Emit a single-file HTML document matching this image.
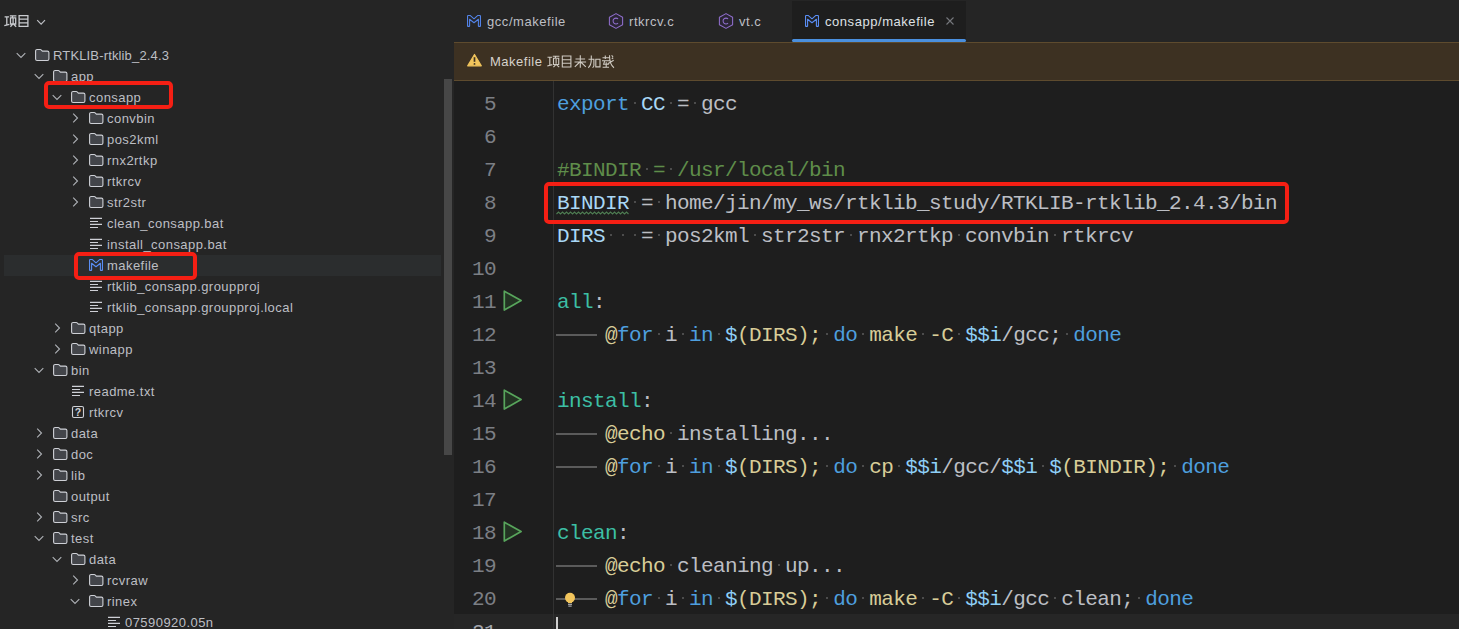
<!DOCTYPE html>
<html><head><meta charset="utf-8">
<style>
*{margin:0;padding:0;box-sizing:border-box}
html,body{width:1459px;height:629px;overflow:hidden;background:#252525}
body{position:relative;font-family:"Liberation Sans",sans-serif;color:#bdbfc4}
.abs{position:absolute}
#left{left:0;top:0;width:454px;height:629px;background:#252525}
.row{position:absolute;left:0;height:21px;width:441px;font-size:13px;line-height:21px;white-space:nowrap}
.row .t{position:absolute;top:0}
.row svg{position:absolute}
.sel{background:#2b2d2e;left:4px;width:437px}
#scroll{left:444px;top:79px;width:8px;height:376px;background:#474747}
#tabs{left:454px;top:0;width:1005px;height:42px;background:#252525}
.tab{position:absolute;top:1px;height:42px;font-size:13px;line-height:42px;letter-spacing:0.55px;color:#bdbfc4;white-space:nowrap}
#banner{left:454px;top:42px;width:1005px;height:39px;background:#3d3122;border-top:1px solid #5e4b2e;border-bottom:1px solid #5e4b2e;font-size:13px;line-height:37px;color:#d6d2cb}
#editor{left:454px;top:81px;width:1005px;height:548px;background:#1e1e1e;overflow:hidden}
.ln{position:absolute;left:0;width:42px;text-align:right;font-family:"Liberation Mono",monospace;font-size:21px;letter-spacing:-0.6px;color:#7c7f85;height:33px;line-height:33px}
.cl{position:absolute;left:103px;font-family:"Liberation Mono",monospace;font-size:21px;letter-spacing:-0.6px;height:33px;line-height:33px;white-space:pre;color:#bcbec4}
.k{color:#4e9fde}.v{color:#a9d8f5}.c{color:#5f8d4a}.tg{color:#3cbfa4}.b{color:#d8cd98}.d{color:#8ecff7}
.red{position:absolute;border:4px solid #f51f14;border-radius:5px}
</style></head><body>
<div id="left" class="abs">
<svg class="abs" style="left:0;top:0" width="60" height="40" viewBox="0 0 60 40">
<g stroke="#c9cbcf" stroke-width="1.3" fill="none">
<path d="M4.6 16.8h4.4M6.8 16.8v8.2M4.3 25.7l5-1.4"/>
<path d="M9.8 15.9h6.6M12.8 15.9l-.6 1.7M10.5 17.8h5.2v6.2h-5.2zM13.1 18.5v4.8M12.6 24.3l-2.2 2.5M13.6 24.3l2.6 2.5"/>
<path d="M19.1 15.6h8.8v10.8h-8.8zM19.1 19.2h8.8M19.1 22.8h8.8"/>
</g>
<path d="M37.2 20.2l3.9 3.9 3.9-3.9" stroke="#bdbfc4" stroke-width="1.2" fill="none"/>
</svg>
<div class="row" style="top:45px"><svg style="left:13px;top:2px" width="16" height="16" viewBox="0 0 16 16"><path d="M3.7 6.2l4.3 4.3 4.3-4.3" fill="none" stroke="#aeb1b6" stroke-width="1.1"/></svg><svg style="left:34px;top:2px" width="16" height="16" viewBox="0 0 16 16"><path d="M1.6 4a1.5 1.5 0 0 1 1.5-1.5h3.3a1 1 0 0 1 .7.3l1.3 1.3h5a1.5 1.5 0 0 1 1.5 1.5v6.4a1.5 1.5 0 0 1-1.5 1.5h-10.3a1.5 1.5 0 0 1-1.5-1.5z" fill="#43454a" stroke="#ced0d6" stroke-width="1.1"/></svg><span class="t" style="left:53px;letter-spacing:0.15px">RTKLIB-rtklib_2.4.3</span></div><div class="row" style="top:66px"><svg style="left:31px;top:2px" width="16" height="16" viewBox="0 0 16 16"><path d="M3.7 6.2l4.3 4.3 4.3-4.3" fill="none" stroke="#aeb1b6" stroke-width="1.1"/></svg><svg style="left:52px;top:2px" width="16" height="16" viewBox="0 0 16 16"><path d="M1.6 4a1.5 1.5 0 0 1 1.5-1.5h3.3a1 1 0 0 1 .7.3l1.3 1.3h5a1.5 1.5 0 0 1 1.5 1.5v6.4a1.5 1.5 0 0 1-1.5 1.5h-10.3a1.5 1.5 0 0 1-1.5-1.5z" fill="#43454a" stroke="#ced0d6" stroke-width="1.1"/></svg><span class="t" style="left:71px;letter-spacing:0.45px">app</span></div><div class="row" style="top:87px"><svg style="left:49px;top:2px" width="16" height="16" viewBox="0 0 16 16"><path d="M3.7 6.2l4.3 4.3 4.3-4.3" fill="none" stroke="#aeb1b6" stroke-width="1.1"/></svg><svg style="left:70px;top:2px" width="16" height="16" viewBox="0 0 16 16"><path d="M1.6 4a1.5 1.5 0 0 1 1.5-1.5h3.3a1 1 0 0 1 .7.3l1.3 1.3h5a1.5 1.5 0 0 1 1.5 1.5v6.4a1.5 1.5 0 0 1-1.5 1.5h-10.3a1.5 1.5 0 0 1-1.5-1.5z" fill="#43454a" stroke="#ced0d6" stroke-width="1.1"/></svg><span class="t" style="left:89px;letter-spacing:0.45px">consapp</span></div><div class="row" style="top:108px"><svg style="left:67px;top:2px" width="16" height="16" viewBox="0 0 16 16"><path d="M6.2 3.7l4.3 4.3-4.3 4.3" fill="none" stroke="#aeb1b6" stroke-width="1.1"/></svg><svg style="left:88px;top:2px" width="16" height="16" viewBox="0 0 16 16"><path d="M1.6 4a1.5 1.5 0 0 1 1.5-1.5h3.3a1 1 0 0 1 .7.3l1.3 1.3h5a1.5 1.5 0 0 1 1.5 1.5v6.4a1.5 1.5 0 0 1-1.5 1.5h-10.3a1.5 1.5 0 0 1-1.5-1.5z" fill="#43454a" stroke="#ced0d6" stroke-width="1.1"/></svg><span class="t" style="left:107px;letter-spacing:0.45px">convbin</span></div><div class="row" style="top:129px"><svg style="left:67px;top:2px" width="16" height="16" viewBox="0 0 16 16"><path d="M6.2 3.7l4.3 4.3-4.3 4.3" fill="none" stroke="#aeb1b6" stroke-width="1.1"/></svg><svg style="left:88px;top:2px" width="16" height="16" viewBox="0 0 16 16"><path d="M1.6 4a1.5 1.5 0 0 1 1.5-1.5h3.3a1 1 0 0 1 .7.3l1.3 1.3h5a1.5 1.5 0 0 1 1.5 1.5v6.4a1.5 1.5 0 0 1-1.5 1.5h-10.3a1.5 1.5 0 0 1-1.5-1.5z" fill="#43454a" stroke="#ced0d6" stroke-width="1.1"/></svg><span class="t" style="left:107px;letter-spacing:0.45px">pos2kml</span></div><div class="row" style="top:150px"><svg style="left:67px;top:2px" width="16" height="16" viewBox="0 0 16 16"><path d="M6.2 3.7l4.3 4.3-4.3 4.3" fill="none" stroke="#aeb1b6" stroke-width="1.1"/></svg><svg style="left:88px;top:2px" width="16" height="16" viewBox="0 0 16 16"><path d="M1.6 4a1.5 1.5 0 0 1 1.5-1.5h3.3a1 1 0 0 1 .7.3l1.3 1.3h5a1.5 1.5 0 0 1 1.5 1.5v6.4a1.5 1.5 0 0 1-1.5 1.5h-10.3a1.5 1.5 0 0 1-1.5-1.5z" fill="#43454a" stroke="#ced0d6" stroke-width="1.1"/></svg><span class="t" style="left:107px;letter-spacing:0.45px">rnx2rtkp</span></div><div class="row" style="top:171px"><svg style="left:67px;top:2px" width="16" height="16" viewBox="0 0 16 16"><path d="M6.2 3.7l4.3 4.3-4.3 4.3" fill="none" stroke="#aeb1b6" stroke-width="1.1"/></svg><svg style="left:88px;top:2px" width="16" height="16" viewBox="0 0 16 16"><path d="M1.6 4a1.5 1.5 0 0 1 1.5-1.5h3.3a1 1 0 0 1 .7.3l1.3 1.3h5a1.5 1.5 0 0 1 1.5 1.5v6.4a1.5 1.5 0 0 1-1.5 1.5h-10.3a1.5 1.5 0 0 1-1.5-1.5z" fill="#43454a" stroke="#ced0d6" stroke-width="1.1"/></svg><span class="t" style="left:107px;letter-spacing:0.45px">rtkrcv</span></div><div class="row" style="top:192px"><svg style="left:67px;top:2px" width="16" height="16" viewBox="0 0 16 16"><path d="M6.2 3.7l4.3 4.3-4.3 4.3" fill="none" stroke="#aeb1b6" stroke-width="1.1"/></svg><svg style="left:88px;top:2px" width="16" height="16" viewBox="0 0 16 16"><path d="M1.6 4a1.5 1.5 0 0 1 1.5-1.5h3.3a1 1 0 0 1 .7.3l1.3 1.3h5a1.5 1.5 0 0 1 1.5 1.5v6.4a1.5 1.5 0 0 1-1.5 1.5h-10.3a1.5 1.5 0 0 1-1.5-1.5z" fill="#43454a" stroke="#ced0d6" stroke-width="1.1"/></svg><span class="t" style="left:107px;letter-spacing:0.45px">str2str</span></div><div class="row" style="top:213px"><svg style="left:88px;top:2px" width="16" height="16" viewBox="0 0 16 16"><g stroke="#ced0d6" stroke-width="1.1"><path d="M2 3.4h12M2 6.5h8M2 9.4h12M2 12.5h8"/></g></svg><span class="t" style="left:107px;letter-spacing:0.45px">clean_consapp.bat</span></div><div class="row" style="top:234px"><svg style="left:88px;top:2px" width="16" height="16" viewBox="0 0 16 16"><g stroke="#ced0d6" stroke-width="1.1"><path d="M2 3.4h12M2 6.5h8M2 9.4h12M2 12.5h8"/></g></svg><span class="t" style="left:107px;letter-spacing:0.45px">install_consapp.bat</span></div><div class="row sel" style="top:255px"><svg style="left:84px;top:2px" width="16" height="16" viewBox="0 0 16 16"><path d="M1.55 12.9V3.1Q1.55 2.45 2.2 2.45H4.1L8 5.8L11.9 2.45H13.8Q14.45 2.45 14.45 3.1V12.9Q14.45 13.4 13.95 13.4H12.9Q12.4 13.4 12.4 12.9V6.3L8 9.7L3.6 6.3V12.9Q3.6 13.4 3.1 13.4H2.05Q1.55 13.4 1.55 12.9Z" fill="none" stroke="#5a8ef5" stroke-width="1.1" stroke-linejoin="round"/></svg><span class="t" style="left:103px;letter-spacing:0.45px">makefile</span></div><div class="row" style="top:276px"><svg style="left:88px;top:2px" width="16" height="16" viewBox="0 0 16 16"><g stroke="#ced0d6" stroke-width="1.1"><path d="M2 3.4h12M2 6.5h8M2 9.4h12M2 12.5h8"/></g></svg><span class="t" style="left:107px;letter-spacing:0.45px">rtklib_consapp.groupproj</span></div><div class="row" style="top:297px"><svg style="left:88px;top:2px" width="16" height="16" viewBox="0 0 16 16"><g stroke="#ced0d6" stroke-width="1.1"><path d="M2 3.4h12M2 6.5h8M2 9.4h12M2 12.5h8"/></g></svg><span class="t" style="left:107px;letter-spacing:0.45px">rtklib_consapp.groupproj.local</span></div><div class="row" style="top:318px"><svg style="left:49px;top:2px" width="16" height="16" viewBox="0 0 16 16"><path d="M6.2 3.7l4.3 4.3-4.3 4.3" fill="none" stroke="#aeb1b6" stroke-width="1.1"/></svg><svg style="left:70px;top:2px" width="16" height="16" viewBox="0 0 16 16"><path d="M1.6 4a1.5 1.5 0 0 1 1.5-1.5h3.3a1 1 0 0 1 .7.3l1.3 1.3h5a1.5 1.5 0 0 1 1.5 1.5v6.4a1.5 1.5 0 0 1-1.5 1.5h-10.3a1.5 1.5 0 0 1-1.5-1.5z" fill="#43454a" stroke="#ced0d6" stroke-width="1.1"/></svg><span class="t" style="left:89px;letter-spacing:0.45px">qtapp</span></div><div class="row" style="top:339px"><svg style="left:49px;top:2px" width="16" height="16" viewBox="0 0 16 16"><path d="M6.2 3.7l4.3 4.3-4.3 4.3" fill="none" stroke="#aeb1b6" stroke-width="1.1"/></svg><svg style="left:70px;top:2px" width="16" height="16" viewBox="0 0 16 16"><path d="M1.6 4a1.5 1.5 0 0 1 1.5-1.5h3.3a1 1 0 0 1 .7.3l1.3 1.3h5a1.5 1.5 0 0 1 1.5 1.5v6.4a1.5 1.5 0 0 1-1.5 1.5h-10.3a1.5 1.5 0 0 1-1.5-1.5z" fill="#43454a" stroke="#ced0d6" stroke-width="1.1"/></svg><span class="t" style="left:89px;letter-spacing:0.45px">winapp</span></div><div class="row" style="top:360px"><svg style="left:31px;top:2px" width="16" height="16" viewBox="0 0 16 16"><path d="M3.7 6.2l4.3 4.3 4.3-4.3" fill="none" stroke="#aeb1b6" stroke-width="1.1"/></svg><svg style="left:52px;top:2px" width="16" height="16" viewBox="0 0 16 16"><path d="M1.6 4a1.5 1.5 0 0 1 1.5-1.5h3.3a1 1 0 0 1 .7.3l1.3 1.3h5a1.5 1.5 0 0 1 1.5 1.5v6.4a1.5 1.5 0 0 1-1.5 1.5h-10.3a1.5 1.5 0 0 1-1.5-1.5z" fill="#43454a" stroke="#ced0d6" stroke-width="1.1"/></svg><span class="t" style="left:71px;letter-spacing:0.45px">bin</span></div><div class="row" style="top:381px"><svg style="left:70px;top:2px" width="16" height="16" viewBox="0 0 16 16"><g stroke="#ced0d6" stroke-width="1.1"><path d="M2 3.4h12M2 6.5h8M2 9.4h12M2 12.5h8"/></g></svg><span class="t" style="left:89px;letter-spacing:0.45px">readme.txt</span></div><div class="row" style="top:402px"><svg style="left:70px;top:2px" width="16" height="16" viewBox="0 0 16 16"><rect x="2.5" y="2.5" width="11" height="11" rx="1.5" fill="none" stroke="#ced0d6" stroke-width="1.1"/><text x="8" y="12" text-anchor="middle" font-family="Liberation Sans" font-weight="bold" font-size="10.5" fill="#ced0d6">?</text></svg><span class="t" style="left:89px;letter-spacing:0.45px">rtkrcv</span></div><div class="row" style="top:423px"><svg style="left:31px;top:2px" width="16" height="16" viewBox="0 0 16 16"><path d="M6.2 3.7l4.3 4.3-4.3 4.3" fill="none" stroke="#aeb1b6" stroke-width="1.1"/></svg><svg style="left:52px;top:2px" width="16" height="16" viewBox="0 0 16 16"><path d="M1.6 4a1.5 1.5 0 0 1 1.5-1.5h3.3a1 1 0 0 1 .7.3l1.3 1.3h5a1.5 1.5 0 0 1 1.5 1.5v6.4a1.5 1.5 0 0 1-1.5 1.5h-10.3a1.5 1.5 0 0 1-1.5-1.5z" fill="#43454a" stroke="#ced0d6" stroke-width="1.1"/></svg><span class="t" style="left:71px;letter-spacing:0.45px">data</span></div><div class="row" style="top:444px"><svg style="left:31px;top:2px" width="16" height="16" viewBox="0 0 16 16"><path d="M6.2 3.7l4.3 4.3-4.3 4.3" fill="none" stroke="#aeb1b6" stroke-width="1.1"/></svg><svg style="left:52px;top:2px" width="16" height="16" viewBox="0 0 16 16"><path d="M1.6 4a1.5 1.5 0 0 1 1.5-1.5h3.3a1 1 0 0 1 .7.3l1.3 1.3h5a1.5 1.5 0 0 1 1.5 1.5v6.4a1.5 1.5 0 0 1-1.5 1.5h-10.3a1.5 1.5 0 0 1-1.5-1.5z" fill="#43454a" stroke="#ced0d6" stroke-width="1.1"/></svg><span class="t" style="left:71px;letter-spacing:0.45px">doc</span></div><div class="row" style="top:465px"><svg style="left:31px;top:2px" width="16" height="16" viewBox="0 0 16 16"><path d="M6.2 3.7l4.3 4.3-4.3 4.3" fill="none" stroke="#aeb1b6" stroke-width="1.1"/></svg><svg style="left:52px;top:2px" width="16" height="16" viewBox="0 0 16 16"><path d="M1.6 4a1.5 1.5 0 0 1 1.5-1.5h3.3a1 1 0 0 1 .7.3l1.3 1.3h5a1.5 1.5 0 0 1 1.5 1.5v6.4a1.5 1.5 0 0 1-1.5 1.5h-10.3a1.5 1.5 0 0 1-1.5-1.5z" fill="#43454a" stroke="#ced0d6" stroke-width="1.1"/></svg><span class="t" style="left:71px;letter-spacing:0.45px">lib</span></div><div class="row" style="top:486px"><svg style="left:52px;top:2px" width="16" height="16" viewBox="0 0 16 16"><path d="M1.6 4a1.5 1.5 0 0 1 1.5-1.5h3.3a1 1 0 0 1 .7.3l1.3 1.3h5a1.5 1.5 0 0 1 1.5 1.5v6.4a1.5 1.5 0 0 1-1.5 1.5h-10.3a1.5 1.5 0 0 1-1.5-1.5z" fill="#43454a" stroke="#ced0d6" stroke-width="1.1"/></svg><span class="t" style="left:71px;letter-spacing:0.45px">output</span></div><div class="row" style="top:507px"><svg style="left:31px;top:2px" width="16" height="16" viewBox="0 0 16 16"><path d="M6.2 3.7l4.3 4.3-4.3 4.3" fill="none" stroke="#aeb1b6" stroke-width="1.1"/></svg><svg style="left:52px;top:2px" width="16" height="16" viewBox="0 0 16 16"><path d="M1.6 4a1.5 1.5 0 0 1 1.5-1.5h3.3a1 1 0 0 1 .7.3l1.3 1.3h5a1.5 1.5 0 0 1 1.5 1.5v6.4a1.5 1.5 0 0 1-1.5 1.5h-10.3a1.5 1.5 0 0 1-1.5-1.5z" fill="#43454a" stroke="#ced0d6" stroke-width="1.1"/></svg><span class="t" style="left:71px;letter-spacing:0.45px">src</span></div><div class="row" style="top:528px"><svg style="left:31px;top:2px" width="16" height="16" viewBox="0 0 16 16"><path d="M3.7 6.2l4.3 4.3 4.3-4.3" fill="none" stroke="#aeb1b6" stroke-width="1.1"/></svg><svg style="left:52px;top:2px" width="16" height="16" viewBox="0 0 16 16"><path d="M1.6 4a1.5 1.5 0 0 1 1.5-1.5h3.3a1 1 0 0 1 .7.3l1.3 1.3h5a1.5 1.5 0 0 1 1.5 1.5v6.4a1.5 1.5 0 0 1-1.5 1.5h-10.3a1.5 1.5 0 0 1-1.5-1.5z" fill="#43454a" stroke="#ced0d6" stroke-width="1.1"/></svg><span class="t" style="left:71px;letter-spacing:0.45px">test</span></div><div class="row" style="top:549px"><svg style="left:49px;top:2px" width="16" height="16" viewBox="0 0 16 16"><path d="M3.7 6.2l4.3 4.3 4.3-4.3" fill="none" stroke="#aeb1b6" stroke-width="1.1"/></svg><svg style="left:70px;top:2px" width="16" height="16" viewBox="0 0 16 16"><path d="M1.6 4a1.5 1.5 0 0 1 1.5-1.5h3.3a1 1 0 0 1 .7.3l1.3 1.3h5a1.5 1.5 0 0 1 1.5 1.5v6.4a1.5 1.5 0 0 1-1.5 1.5h-10.3a1.5 1.5 0 0 1-1.5-1.5z" fill="#43454a" stroke="#ced0d6" stroke-width="1.1"/></svg><span class="t" style="left:89px;letter-spacing:0.45px">data</span></div><div class="row" style="top:570px"><svg style="left:67px;top:2px" width="16" height="16" viewBox="0 0 16 16"><path d="M6.2 3.7l4.3 4.3-4.3 4.3" fill="none" stroke="#aeb1b6" stroke-width="1.1"/></svg><svg style="left:88px;top:2px" width="16" height="16" viewBox="0 0 16 16"><path d="M1.6 4a1.5 1.5 0 0 1 1.5-1.5h3.3a1 1 0 0 1 .7.3l1.3 1.3h5a1.5 1.5 0 0 1 1.5 1.5v6.4a1.5 1.5 0 0 1-1.5 1.5h-10.3a1.5 1.5 0 0 1-1.5-1.5z" fill="#43454a" stroke="#ced0d6" stroke-width="1.1"/></svg><span class="t" style="left:107px;letter-spacing:0.45px">rcvraw</span></div><div class="row" style="top:591px"><svg style="left:67px;top:2px" width="16" height="16" viewBox="0 0 16 16"><path d="M3.7 6.2l4.3 4.3 4.3-4.3" fill="none" stroke="#aeb1b6" stroke-width="1.1"/></svg><svg style="left:88px;top:2px" width="16" height="16" viewBox="0 0 16 16"><path d="M1.6 4a1.5 1.5 0 0 1 1.5-1.5h3.3a1 1 0 0 1 .7.3l1.3 1.3h5a1.5 1.5 0 0 1 1.5 1.5v6.4a1.5 1.5 0 0 1-1.5 1.5h-10.3a1.5 1.5 0 0 1-1.5-1.5z" fill="#43454a" stroke="#ced0d6" stroke-width="1.1"/></svg><span class="t" style="left:107px;letter-spacing:0.45px">rinex</span></div><div class="row" style="top:612px"><svg style="left:106px;top:2px" width="16" height="16" viewBox="0 0 16 16"><g stroke="#ced0d6" stroke-width="1.1"><path d="M2 3.4h12M2 6.5h8M2 9.4h12M2 12.5h8"/></g></svg><span class="t" style="left:125px;letter-spacing:0.45px">07590920.05n</span></div>
</div>
<div id="scroll" class="abs"></div>
<div id="tabs" class="abs"><svg style="position:absolute;left:12px;top:13px" width="16" height="16" viewBox="0 0 16 16"><path d="M1.55 12.9V3.1Q1.55 2.45 2.2 2.45H4.1L8 5.8L11.9 2.45H13.8Q14.45 2.45 14.45 3.1V12.9Q14.45 13.4 13.95 13.4H12.9Q12.4 13.4 12.4 12.9V6.3L8 9.7L3.6 6.3V12.9Q3.6 13.4 3.1 13.4H2.05Q1.55 13.4 1.55 12.9Z" fill="none" stroke="#5283e8" stroke-width="1.1" stroke-linejoin="round"/></svg><span class="tab" style="left:33px">gcc/makefile</span><svg style="position:absolute;left:154px;top:13px" width="16" height="16" viewBox="0 0 16 16"><path d="M8 0.6L14.6 4.3V11.7L8 15.4L1.4 11.7V4.3Z" fill="#2a2534" stroke="#8f6ecb" stroke-width="1.05" stroke-linejoin="round"/><path d="M10.05 5.95A2.9 2.9 0 1 0 10.05 10.05" fill="none" stroke="#8f6ecb" stroke-width="1.05"/></svg><span class="tab" style="left:175px">rtkrcv.c</span><svg style="position:absolute;left:264px;top:13px" width="16" height="16" viewBox="0 0 16 16"><path d="M8 0.6L14.6 4.3V11.7L8 15.4L1.4 11.7V4.3Z" fill="#2a2534" stroke="#8f6ecb" stroke-width="1.05" stroke-linejoin="round"/><path d="M10.05 5.95A2.9 2.9 0 1 0 10.05 10.05" fill="none" stroke="#8f6ecb" stroke-width="1.05"/></svg><span class="tab" style="left:285px">vt.c</span><div style="position:absolute;left:338px;top:1px;width:174px;height:41px;background:#1e1e1e"></div><div style="position:absolute;left:338px;top:39px;width:174px;height:3px;background:#4a8fde;border-radius:2px"></div><svg style="position:absolute;left:350px;top:13px" width="16" height="16" viewBox="0 0 16 16"><path d="M1.55 12.9V3.1Q1.55 2.45 2.2 2.45H4.1L8 5.8L11.9 2.45H13.8Q14.45 2.45 14.45 3.1V12.9Q14.45 13.4 13.95 13.4H12.9Q12.4 13.4 12.4 12.9V6.3L8 9.7L3.6 6.3V12.9Q3.6 13.4 3.1 13.4H2.05Q1.55 13.4 1.55 12.9Z" fill="none" stroke="#5a8ef5" stroke-width="1.1" stroke-linejoin="round"/></svg><span class="tab" style="left:371px;color:#dfe1e5">consapp/makefile</span><svg style="position:absolute;left:490px;top:15px" width="12" height="12" viewBox="0 0 12 12"><path d="M2.5 2.5l7 7M9.5 2.5l-7 7" stroke="#76787d" stroke-width="1.1"/></svg></div>
<div id="banner" class="abs"><svg style="position:absolute;left:12px;top:9px" width="18" height="18" viewBox="0 0 18 18"><path d="M8.5 2.5L15.3 13.8H1.7Z" fill="#f2c55c" stroke="#f2c55c" stroke-width="1.2" stroke-linejoin="round"/><path d="M8.5 5.2v4.6" stroke="#3d3122" stroke-width="1.7"/><circle cx="8.5" cy="11.9" r="0.95" fill="#3d3122"/></svg><span style="position:absolute;left:36px;top:0;letter-spacing:0.5px">Makefile</span><svg style="position:absolute;left:93px;top:10px" width="70" height="18" viewBox="0 0 70 18"><g stroke="#cfcac2" stroke-width="1.1" fill="none"><path d="M0.5 4.3h4.6M2.8 4.3v7.8M0.3 13l5-1.4M5.8 3.3h6.6M8.8 3.3l-.6 1.7M6.5 5.2h5.2v6.3H6.5zM9.1 5.9v4.9M8.6 11.8l-2.2 2.3M9.6 11.8l2.6 2.3"/><path d="M15.3 3h8.6v11h-8.6zM15.3 6.7h8.6M15.3 10.3h8.6"/><path d="M28.5 6h9.6M27.5 9h11.6M33.3 2.3v12.4M32.8 9l-5 4.8M33.8 9l5 4.8"/><path d="M41.5 6.3h5.4v6.3c0 1.4-.5 1.9-1.5 1.9M44.3 2.6v4c0 4-1 6.5-3 8.1M48.8 6.3h4.2v7.6h-4.2z"/><path d="M55.5 4.8h6.6M58.3 2.6v3.3M55 7.8h8M57.6 8.3l-1 3h5.3M59.2 9.2v5.5M55.6 14.3h6.4M62.5 2.3c0 6 1 10 4.5 12.4M66.2 4.8l-1.4 1M60.8 10.8l5.9-3.5M64.6 2.3l1.5 1.5"/></g></svg></div>
<div id="editor" class="abs">
<div style="position:absolute;left:0;top:533px;width:1005px;height:33px;background:#262626"></div>
<div style="position:absolute;left:99px;top:0;width:1px;height:549px;background:#323232"></div>
<div class="ln" style="top:7px;">5</div>
<div class="cl" style="top:7px"><span class="k">export</span> <span class="v">CC</span> = gcc</div>
<div class="ln" style="top:40px;">6</div>
<div class="ln" style="top:73px;">7</div>
<div class="cl" style="top:73px"><span class="c">#BINDIR = /usr/local/bin</span></div>
<div class="ln" style="top:106px;">8</div>
<div class="cl" style="top:106px"><span class="v">BINDIR</span> = home/jin/my_ws/rtklib_study/RTKLIB-rtklib_2.4.3/bin</div>
<div class="ln" style="top:139px;">9</div>
<div class="cl" style="top:139px"><span class="v">DIRS</span>   = pos2kml str2str rnx2rtkp convbin rtkrcv</div>
<div class="ln" style="top:172px;">10</div>
<div class="ln" style="top:205px;">11</div>
<div class="cl" style="top:205px"><span class="tg">all</span>:</div>
<div class="ln" style="top:238px;">12</div>
<div class="cl" style="top:238px">    <span class="b">@</span><span class="k">for</span> i <span class="k">in</span> <span class="d">$</span><span class="b">(DIRS);</span> <span class="k">do</span> <span class="b">make -C</span> <span class="d">$$i</span>/gcc; <span class="k">done</span></div>
<div class="ln" style="top:271px;">13</div>
<div class="ln" style="top:304px;">14</div>
<div class="cl" style="top:304px"><span class="tg">install</span>:</div>
<div class="ln" style="top:337px;">15</div>
<div class="cl" style="top:337px">    <span class="b">@echo</span> installing...</div>
<div class="ln" style="top:370px;">16</div>
<div class="cl" style="top:370px">    <span class="b">@</span><span class="k">for</span> i <span class="k">in</span> <span class="d">$</span><span class="b">(DIRS);</span> <span class="k">do</span> <span class="b">cp</span> <span class="d">$$i</span>/gcc/<span class="d">$$i</span> <span class="d">$</span><span class="b">(BINDIR);</span> <span class="k">done</span></div>
<div class="ln" style="top:403px;">17</div>
<div class="ln" style="top:436px;">18</div>
<div class="cl" style="top:436px"><span class="tg">clean</span>:</div>
<div class="ln" style="top:469px;">19</div>
<div class="cl" style="top:469px">    <span class="b">@echo</span> cleaning up...</div>
<div class="ln" style="top:502px;">20</div>
<div class="cl" style="top:502px">    <span class="b">@</span><span class="k">for</span> i <span class="k">in</span> <span class="d">$</span><span class="b">(DIRS);</span> <span class="k">do</span> <span class="b">make -C</span> <span class="d">$$i</span>/gcc clean; <span class="k">done</span></div>
<div class="ln" style="top:535px;color:#a1a3ab;">21</div>
<div style="position:absolute;left:180px;top:21px;width:2px;height:2px;background:#4c4c4c"></div>
<div style="position:absolute;left:216px;top:21px;width:2px;height:2px;background:#4c4c4c"></div>
<div style="position:absolute;left:240px;top:21px;width:2px;height:2px;background:#4c4c4c"></div>
<div style="position:absolute;left:192px;top:87px;width:2px;height:2px;background:#4c4c4c"></div>
<div style="position:absolute;left:216px;top:87px;width:2px;height:2px;background:#4c4c4c"></div>
<div style="position:absolute;left:180px;top:120px;width:2px;height:2px;background:#4c4c4c"></div>
<div style="position:absolute;left:204px;top:120px;width:2px;height:2px;background:#4c4c4c"></div>
<div style="position:absolute;left:156px;top:153px;width:2px;height:2px;background:#4c4c4c"></div>
<div style="position:absolute;left:168px;top:153px;width:2px;height:2px;background:#4c4c4c"></div>
<div style="position:absolute;left:180px;top:153px;width:2px;height:2px;background:#4c4c4c"></div>
<div style="position:absolute;left:204px;top:153px;width:2px;height:2px;background:#4c4c4c"></div>
<div style="position:absolute;left:300px;top:153px;width:2px;height:2px;background:#4c4c4c"></div>
<div style="position:absolute;left:396px;top:153px;width:2px;height:2px;background:#4c4c4c"></div>
<div style="position:absolute;left:504px;top:153px;width:2px;height:2px;background:#4c4c4c"></div>
<div style="position:absolute;left:600px;top:153px;width:2px;height:2px;background:#4c4c4c"></div>
<div style="position:absolute;left:102px;top:253px;width:41px;height:2px;background:#5b5b5b"></div>
<div style="position:absolute;left:204px;top:252px;width:2px;height:2px;background:#4c4c4c"></div>
<div style="position:absolute;left:228px;top:252px;width:2px;height:2px;background:#4c4c4c"></div>
<div style="position:absolute;left:264px;top:252px;width:2px;height:2px;background:#4c4c4c"></div>
<div style="position:absolute;left:372px;top:252px;width:2px;height:2px;background:#4c4c4c"></div>
<div style="position:absolute;left:408px;top:252px;width:2px;height:2px;background:#4c4c4c"></div>
<div style="position:absolute;left:468px;top:252px;width:2px;height:2px;background:#4c4c4c"></div>
<div style="position:absolute;left:504px;top:252px;width:2px;height:2px;background:#4c4c4c"></div>
<div style="position:absolute;left:612px;top:252px;width:2px;height:2px;background:#4c4c4c"></div>
<div style="position:absolute;left:102px;top:352px;width:41px;height:2px;background:#5b5b5b"></div>
<div style="position:absolute;left:216px;top:351px;width:2px;height:2px;background:#4c4c4c"></div>
<div style="position:absolute;left:102px;top:385px;width:41px;height:2px;background:#5b5b5b"></div>
<div style="position:absolute;left:204px;top:384px;width:2px;height:2px;background:#4c4c4c"></div>
<div style="position:absolute;left:228px;top:384px;width:2px;height:2px;background:#4c4c4c"></div>
<div style="position:absolute;left:264px;top:384px;width:2px;height:2px;background:#4c4c4c"></div>
<div style="position:absolute;left:372px;top:384px;width:2px;height:2px;background:#4c4c4c"></div>
<div style="position:absolute;left:408px;top:384px;width:2px;height:2px;background:#4c4c4c"></div>
<div style="position:absolute;left:444px;top:384px;width:2px;height:2px;background:#4c4c4c"></div>
<div style="position:absolute;left:588px;top:384px;width:2px;height:2px;background:#4c4c4c"></div>
<div style="position:absolute;left:720px;top:384px;width:2px;height:2px;background:#4c4c4c"></div>
<div style="position:absolute;left:102px;top:484px;width:41px;height:2px;background:#5b5b5b"></div>
<div style="position:absolute;left:216px;top:483px;width:2px;height:2px;background:#4c4c4c"></div>
<div style="position:absolute;left:324px;top:483px;width:2px;height:2px;background:#4c4c4c"></div>
<div style="position:absolute;left:102px;top:517px;width:41px;height:2px;background:#5b5b5b"></div>
<div style="position:absolute;left:204px;top:516px;width:2px;height:2px;background:#4c4c4c"></div>
<div style="position:absolute;left:228px;top:516px;width:2px;height:2px;background:#4c4c4c"></div>
<div style="position:absolute;left:264px;top:516px;width:2px;height:2px;background:#4c4c4c"></div>
<div style="position:absolute;left:372px;top:516px;width:2px;height:2px;background:#4c4c4c"></div>
<div style="position:absolute;left:408px;top:516px;width:2px;height:2px;background:#4c4c4c"></div>
<div style="position:absolute;left:468px;top:516px;width:2px;height:2px;background:#4c4c4c"></div>
<div style="position:absolute;left:504px;top:516px;width:2px;height:2px;background:#4c4c4c"></div>
<div style="position:absolute;left:600px;top:516px;width:2px;height:2px;background:#4c4c4c"></div>
<div style="position:absolute;left:684px;top:516px;width:2px;height:2px;background:#4c4c4c"></div>
<svg style="position:absolute;left:102px;top:130px" width="74" height="4" viewBox="0 0 74 4"><path d="M0.5 3l2-2l2 2l2-2l2 2l2-2l2 2l2-2l2 2l2-2l2 2l2-2l2 2l2-2l2 2l2-2l2 2l2-2l2 2l2-2l2 2l2-2l2 2l2-2l2 2l2-2l2 2l2-2l2 2l2-2l2 2l2-2l2 2l2-2l2 2l2-2l2 2" fill="none" stroke="#4e7d52" stroke-width="1.1"/></svg>
<svg style="position:absolute;left:47px;top:209px" width="24" height="22" viewBox="0 0 24 22"><path d="M3.3 1.2L20.1 10.6L3.3 20Z" fill="#233323" stroke="#58a55c" stroke-width="1.7" stroke-linejoin="round"/></svg>
<svg style="position:absolute;left:47px;top:308px" width="24" height="22" viewBox="0 0 24 22"><path d="M3.3 1.2L20.1 10.6L3.3 20Z" fill="#233323" stroke="#58a55c" stroke-width="1.7" stroke-linejoin="round"/></svg>
<svg style="position:absolute;left:47px;top:440px" width="24" height="22" viewBox="0 0 24 22"><path d="M3.3 1.2L20.1 10.6L3.3 20Z" fill="#233323" stroke="#58a55c" stroke-width="1.7" stroke-linejoin="round"/></svg>
<svg style="position:absolute;left:108px;top:510px" width="16" height="18" viewBox="0 0 16 18"><circle cx="8" cy="6.8" r="5" fill="#f2c55c"/><path d="M6 11.5h4" stroke="#f2c55c" stroke-width="1.2"/><path d="M6 13.3h4M6.3 15.1h3.4" stroke="#d5d5d5" stroke-width="0.9"/></svg>
<div style="position:absolute;left:102px;top:536px;width:2px;height:22px;background:#cecece"></div>
</div>
<div class="red" style="left:44px;top:81px;width:129px;height:28px"></div>
<div class="red" style="left:74px;top:252px;width:123px;height:28px"></div>
<div class="red" style="left:544px;top:182px;width:745px;height:42px"></div>
</body></html>
